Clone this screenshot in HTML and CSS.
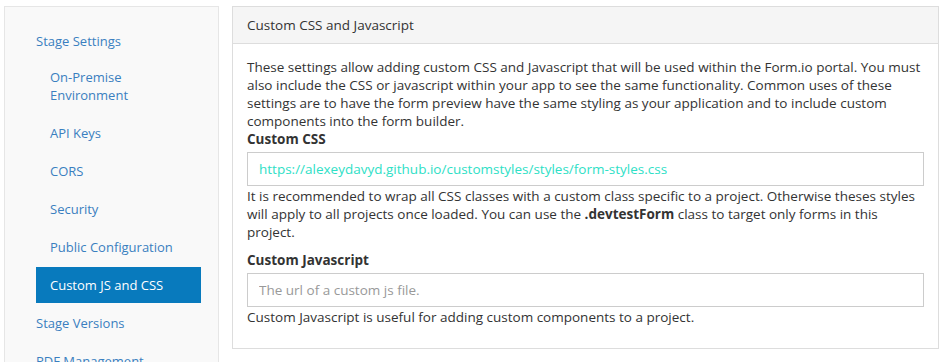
FILE: index.html
```html
<!DOCTYPE html>
<html lang="en">
<head>
  <meta charset="UTF-8" />
  <title>Custom JS and CSS</title>
  <link rel="stylesheet" href="styles.css">
</head>
<body>
  <div class="layout">
    <aside class="sidebar">
      <ul class="nav">
        <li><a href="#">Stage Settings</a>
          <ul class="sub-nav">
            <li><a href="#">On-Premise Environment</a></li>
            <li><a href="#">API Keys</a></li>
            <li><a href="#">CORS</a></li>
            <li><a href="#">Security</a></li>
            <li><a href="#">Public Configuration</a></li>
            <li class="active"><a href="#">Custom JS and CSS</a></li>
          </ul>
        </li>
        <li><a href="#">Stage Versions</a></li>
        <li><a href="#">PDF Management</a></li>
      </ul>
    </aside>

    <section class="panel">
      <div class="panel-heading">Custom CSS and Javascript</div>
      <div class="panel-body">
        <p>These settings allow adding custom CSS and Javascript that will be used within the Form.io portal. You must also include the CSS or javascript within your app to see the same functionality. Common uses of these settings are to have the form preview have the same styling as your application and to include custom components into the form builder.</p>

        <div class="form-group">
          <label for="customCss">Custom CSS</label>
          <input type="text" id="customCss" class="form-control url" value="https://alexeydavyd.github.io/customstyles/styles/form-styles.css" />
          <p class="help-block">It is recommended to wrap all CSS classes with a custom class specific to a project. Otherwise theses styles will apply to all projects once loaded. You can use the <strong>.devtestForm</strong> class to target only forms in this project.</p>
        </div>

        <div class="form-group">
          <label for="customJs">Custom Javascript</label>
          <input type="text" id="customJs" class="form-control" placeholder="The url of a custom js file." />
          <p class="help-block">Custom Javascript is useful for adding custom components to a project.</p>
        </div>
      </div>
    </section>
  </div>
</body>
</html>
```

FILE: styles.css
```css
body {
  font-family: 'Open Sans', sans-serif;
  font-size: 13.5px;
  line-height: 18px;
  color: #333;
  background: #fff;
  margin: 0;
  padding: 0;
  height: 362px;
  overflow: hidden;
}
.layout {
  display: flex;
  align-items: flex-start;
  gap: 13px;
  padding: 6px 10px 0 4px;
}
.sidebar {
  width: 215px;
  height: 400px;
  flex: none;
  background: #f9f9f9;
  border: 1px solid #e6e6e6;
  box-sizing: border-box;
  font-size: 13px;
}
.nav,
.sub-nav {
  list-style: none;
  margin: 0;
  padding: 0;
}
.nav {
  padding: 16px 17px 0 31px;
}
.nav li {
  margin-bottom: 2px;
}
.nav a {
  display: block;
  padding: 9px 0;
  color: #3a7fc0;
  text-decoration: none;
}
.sub-nav a {
  padding: 9px 14px;
}
.sub-nav li.active a {
  background: #087abd;
  color: #fff;
}
.panel {
  flex: 1;
  border: 1px solid #ddd;
  background: #fff;
}
.panel-heading {
  background: #f5f5f5;
  border-bottom: 1px solid #ddd;
  padding: 9px 14px;
}
.panel-body {
  padding: 14px 14px 12px 14px;
}
.panel-body p {
  margin: 0;
}
label {
  display: block;
  font-weight: bold;
  margin-bottom: 4px;
}
.form-control {
  display: block;
  width: 100%;
  height: 34px;
  box-sizing: border-box;
  padding: 6px 11px;
  border: 1px solid #ccc;
  font-family: inherit;
  font-size: 13.5px;
  color: #555;
  outline: none;
}
.form-control::placeholder {
  color: #999;
}
.form-control.url {
  color: #2ee0c6;
}
.help-block {
  margin-top: 1px !important;
}
.form-group {
  margin-bottom: 10px;
}
```
